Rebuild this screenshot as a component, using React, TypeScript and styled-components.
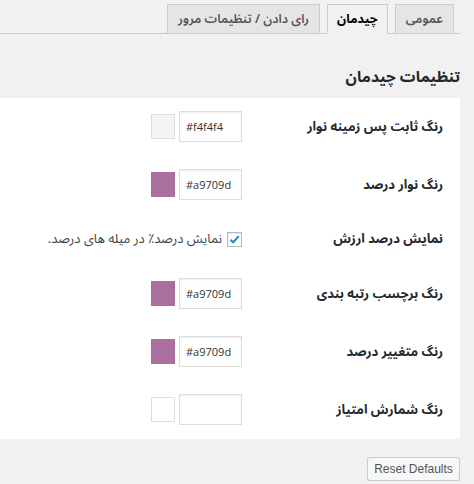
import React from 'react';
import styled, { createGlobalStyle } from 'styled-components';

const GlobalStyle = createGlobalStyle`
  body {
    margin: 0;
    background: #f1f1f1;
    font-family: "Noto Sans Arabic", "Noto Naskh Arabic", Tahoma, "DejaVu Sans", "Noto Sans", sans-serif;
    color: #23282d;
  }
`;

const Wrap = styled.div`
  width: 460px;
  direction: rtl;
  padding-top: 4px;
`;

const TabBar = styled.div`
  display: flex;
  gap: 7px;
  padding-right: 6px;
  border-bottom: 1px solid #ccc;
  height: 29px;
`;

const Tab = styled.div<{ $active?: boolean }>`
  height: ${(p) => (p.$active ? '30px' : '29px')};
  line-height: 28px;
  padding: 0 ${(p) => (p.$active ? '9px' : '10px')};
  box-sizing: border-box;
  border: 1px solid #ccc;
  border-bottom: ${(p) => (p.$active ? '1px solid #f1f1f1' : 'none')};
  background: ${(p) => (p.$active ? '#f1f1f1' : '#e5e5e5')};
  color: ${(p) => (p.$active ? '#000' : '#555')};
  font-size: 12.5px;
  font-weight: ${(p) => (p.$active ? 700 : 600)};
  white-space: nowrap;
`;

const Heading = styled.h2`
  margin: 31px 0 9px;
  font-size: 15.5px;
  line-height: 24px;
  font-weight: 700;
  color: #23282d;
`;

const Panel = styled.div`
  background: #fff;
  padding: 0 17px 0 0;
`;

const Row = styled.div<{ $tight?: boolean }>`
  display: flex;
  align-items: center;
  padding: 13px 0 14px;
  height: ${(p) => (p.$tight ? '24px' : '31px')};
`;

const Label = styled.div`
  width: 201px;
  flex-shrink: 0;
  font-size: 13px;
  line-height: 20px;
  font-weight: 700;
  color: #23282d;
`;

const Field = styled.div`
  display: flex;
  align-items: center;
  gap: 4px;
`;

const HexInput = styled.div`
  width: 63px;
  height: 31px;
  box-sizing: border-box;
  border: 1px solid #ddd;
  box-shadow: inset 0 1px 2px rgba(0, 0, 0, 0.07);
  background: #fff;
  direction: ltr;
  text-align: left;
  padding-left: 6px;
  font-family: "Open Sans", "Liberation Sans", sans-serif;
  font-size: 11px;
  line-height: 29px;
  color: #333;
`;

const Swatch = styled.div<{ $color: string }>`
  width: 24px;
  height: 25px;
  box-sizing: border-box;
  background: ${(p) => p.$color};
  border: 1px solid ${(p) => (p.$color === '#a9709d' ? '#a9709d' : '#ddd')};
`;

const CheckLine = styled.label`
  display: flex;
  align-items: center;
  gap: 5px;
  font-size: 13px;
  line-height: 20px;
  color: #444;
`;

const CheckBox = styled.span`
  width: 15px;
  height: 15px;
  box-sizing: border-box;
  border: 1px solid #b4b9be;
  background: #fff;
  box-shadow: inset 0 1px 2px rgba(0, 0, 0, 0.1);
  display: flex;
  align-items: center;
  justify-content: center;
`;

const Footer = styled.div`
  display: flex;
  padding-top: 18px;
`;

const Button = styled.button`
  height: 24px;
  width: 93px;
  padding: 0;
  border: 1px solid #ccc;
  border-radius: 3px;
  background: #f7f7f7;
  box-shadow: 0 1px 0 #ccc;
  color: #555;
  font-family: "Liberation Sans", Arial, sans-serif;
  font-size: 12px;
  line-height: 22px;
  cursor: pointer;
`;

const colorRows = [
  { label: 'رنگ ثابت پس زمینه نوار', color: '#f4f4f4', value: '#f4f4f4' },
  { label: 'رنگ نوار درصد', color: '#a9709d', value: '#a9709d' },
];

const colorRows2 = [
  { label: 'رنگ برچسب رتبه بندی', color: '#a9709d', value: '#a9709d' },
  { label: 'رنگ متغییر درصد', color: '#a9709d', value: '#a9709d' },
  { label: 'رنگ شمارش امتیاز', color: '#ffffff', value: '' },
];

const ColorRow = ({ label, color, value }: { label: string; color: string; value: string }) => (
  <Row>
    <Label>{label}</Label>
    <Field>
      <HexInput>{value}</HexInput>
      <Swatch $color={color} />
    </Field>
  </Row>
);

export default function App() {
  return (
    <>
      <GlobalStyle />
      <Wrap>
        <TabBar>
          <Tab>عمومی</Tab>
          <Tab $active>چیدمان</Tab>
          <Tab>رای دادن / تنظیمات مرور</Tab>
        </TabBar>
        <Heading>تنظیمات چیدمان</Heading>
        <Panel>
          {colorRows.map((r) => (
            <ColorRow key={r.label} {...r} />
          ))}
          <Row $tight>
            <Label>نمایش درصد ارزش</Label>
            <CheckLine>
              <CheckBox>
                <svg width="13" height="13" viewBox="0 0 16 16">
                  <path d="M3 8.2 L6.4 11.5 L13.2 3.8" fill="none" stroke="#1e8cbe" strokeWidth="2.6" />
                </svg>
              </CheckBox>
              نمایش درصد٪ در میله های درصد.
            </CheckLine>
          </Row>
          {colorRows2.map((r) => (
            <ColorRow key={r.label} {...r} />
          ))}
        </Panel>
        <Footer>
          <Button>Reset Defaults</Button>
        </Footer>
      </Wrap>
    </>
  );
}
